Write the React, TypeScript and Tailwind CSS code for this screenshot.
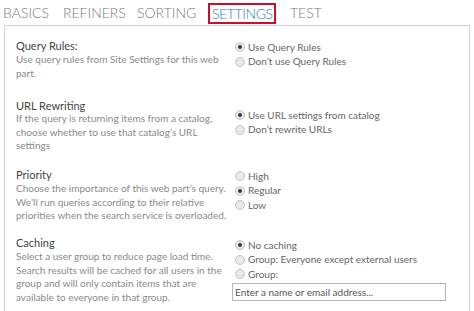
import React from "react";

type Opt = { label: string; checked?: boolean };

const Radio = ({ label, checked }: Opt) => (
    <div className="flex items-center h-[14.5px] ml-[3px]">
        <span className="w-[10px] h-[10px] rounded-full border border-[#c3c3c3] bg-[#e9e9e9] flex items-center justify-center shrink-0">
            {checked && <span className="w-[4px] h-[4px] rounded-full bg-[#3a3a3a]" />}
        </span>
        <span className="ml-[3px] text-[10px] text-[#666] whitespace-nowrap">{label}</span>
    </div>
);

interface RowProps {
    title: string;
    lines: string[];
    options: Opt[];
    height: string;
    descMt: string;
    optMt: string;
    children?: React.ReactNode;
}

const Row = ({ title, lines, options, height, descMt, optMt, children }: RowProps) => (
    <div className={`flex ${height}`}>
        <div className="w-[216px] shrink-0">
            <div className="text-[11px] leading-[14px] text-[#444] whitespace-nowrap">{title}</div>
            <div className={descMt}>
                {lines.map((l) => (
                    <div key={l} className="text-[10px] leading-[13.5px] text-[#8a8a8a] whitespace-nowrap">{l}</div>
                ))}
            </div>
        </div>
        <div className={`flex flex-col ${optMt}`}>
            {options.map((o) => (
                <Radio key={o.label} {...o} />
            ))}
            {children}
        </div>
    </div>
);

const tabs = [
    { name: "BASICS", w: "w-[60px]" },
    { name: "REFINERS", w: "w-[74px]" },
    { name: "SORTING", w: "w-[71px]" },
];

export default function App() {
    return (
        <div className="w-[474px] h-[311px] bg-white overflow-hidden flex flex-col" style={{ fontFamily: "Lato, 'Open Sans', sans-serif" }}>
            <div className="flex items-start h-[25px] pl-[3px]">
                {tabs.map((t) => (
                    <div key={t.name} className={`${t.w} text-[14px] font-light leading-[20px] mt-[3px] text-[#7a7a7a]`}>{t.name}</div>
                ))}
                <div className="w-[68px] h-[21px] mt-[3px] border-2 border-[#c8102e] text-[14px] font-light leading-[17px] tracking-[-0.4px] text-[#2f7cb4] pl-[2px] whitespace-nowrap overflow-hidden">SETTINGS</div>
                <div className="ml-[14px] text-[14px] font-light leading-[20px] mt-[3px] text-[#7a7a7a]">TEST</div>
            </div>
            <div className="ml-[4px] w-[466px] flex-1 border-l border-t border-r border-[#d2d2d2] pl-[11px] pt-[13px]">
                <Row
                    title="Query Rules:"
                    lines={["Use query rules from Site Settings for this web", "part."]}
                    options={[{ label: "Use Query Rules", checked: true }, { label: "Don’t use Query Rules" }]}
                    height="h-[60px]"
                    descMt="mt-0"
                    optMt="mt-[1px]"
                />
                <Row
                    title="URL Rewriting"
                    lines={["If the query is returning items from a catalog,", "choose whether to use that catalog’s URL", "settings"]}
                    options={[{ label: "Use URL settings from catalog", checked: true }, { label: "Don’t rewrite URLs" }]}
                    height="h-[69px]"
                    descMt="-mt-[1px]"
                    optMt="mt-[9px]"
                />
                <Row
                    title="Priority"
                    lines={[
                        "Choose the importance of this web part’s query.",
                        "We’ll run queries according to their relative",
                        "priorities when the search service is overloaded.",
                    ]}
                    options={[{ label: "High" }, { label: "Regular", checked: true }, { label: "Low" }]}
                    height="h-[68px]"
                    descMt="mt-0"
                    optMt="mt-[1px]"
                />
                <Row
                    title="Caching"
                    lines={[
                        "Select a user group to reduce page load time.",
                        "Search results will be cached for all users in the",
                        "group and will only contain items that are",
                        "available to everyone in that group.",
                    ]}
                    options={[
                        { label: "No caching", checked: true },
                        { label: "Group: Everyone except external users" },
                        { label: "Group:" },
                    ]}
                    height="h-[70px]"
                    descMt="mt-0"
                    optMt="mt-[2px]"
                >
                    <div className="mt-[1px] w-[214px] h-[18px] border border-[#b5b5b5] text-[10px] leading-[16px] text-[#555] pl-[2px] whitespace-nowrap">
                        Enter a name or email address...
                    </div>
                </Row>
            </div>
        </div>
    );
}
